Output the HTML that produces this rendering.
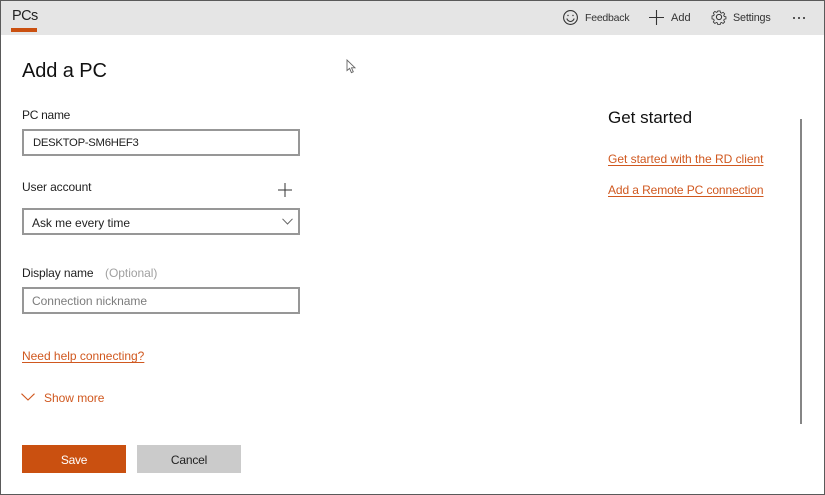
<!DOCTYPE html>
<html><head><meta charset="utf-8"><style>
html,body{margin:0;padding:0;background:#fff}
#p{position:relative;width:825px;height:495px;overflow:hidden;background:#fff;font-family:"Liberation Sans",sans-serif;color:#1f1f1f;filter:blur(.3px)}
#p div,#p svg{position:absolute}
.t{white-space:nowrap;font-size:12.5px;line-height:16px}
.l{color:#d0581f;text-decoration:underline;text-underline-offset:2px}
.b{box-sizing:border-box;left:22px;width:278px;height:27px;border:2px solid #979797;background:#fff}
</style></head><body><div id="p">
<div style="left:0;top:0;width:825px;height:35px;background:#e5e5e5"></div>
<div style="left:0;top:0;width:825px;height:1px;background:#5a5a5a"></div>
<div style="left:0;top:0;width:1px;height:495px;background:#5a5a5a"></div>
<div style="left:823.5px;top:0;width:1.5px;height:495px;background:#5a5a5a"></div>
<div style="left:0;top:493.5px;width:825px;height:1.5px;background:#5a5a5a"></div>
<div class="t" style="left:12px;top:7px;font-size:14.5px;line-height:18px;letter-spacing:-.6px;color:#222">PCs</div>
<div style="left:11px;top:28px;width:26px;height:4px;background:#ca5010"></div>

<svg style="left:562px;top:9px" width="17" height="17" viewBox="0 0 17 17" fill="none" stroke="#333" stroke-width="1.1"><circle cx="8.5" cy="8.5" r="6.9"/><path d="M4.8 9.6c.8 2 2.2 2.9 3.7 2.9s2.9-.9 3.7-2.9"/><circle cx="6" cy="6.5" r=".7" fill="#333" stroke="none"/><circle cx="11" cy="6.5" r=".7" fill="#333" stroke="none"/></svg>
<div class="t" style="left:585px;top:10px;font-size:10.5px;letter-spacing:-.22px;color:#333">Feedback</div>
<svg style="left:649px;top:10px" width="15" height="15" viewBox="0 0 15 15" stroke="#333" stroke-width="1.1"><path d="M0 7.5H15M7.5 0V15"/></svg>
<div class="t" style="left:671px;top:10px;font-size:11px;color:#333">Add</div>
<svg style="left:711px;top:9px" width="16" height="16" viewBox="0 0 16 16" fill="none" stroke="#333" stroke-width="1"><circle cx="8" cy="8" r="2.6"/><path d="M6.7 1h2.6l.4 2 1.3.6 1.8-1.1 1.8 1.9-1.1 1.7.6 1.3 2 .4v2.4l-2 .4-.6 1.3 1.1 1.8-1.8 1.8-1.8-1.1-1.3.6-.4 2H6.7l-.4-2-1.3-.6-1.8 1.1-1.8-1.8 1.1-1.8-.6-1.3-2-.4V6.8l2-.4.6-1.3-1.1-1.7 1.8-1.9L5 2.6l1.3-.6z" transform="translate(1.1 1.1) scale(.86)"/></svg>
<div class="t" style="left:733px;top:10px;font-size:10.8px;letter-spacing:-.18px;color:#333">Settings</div>
<div style="left:793px;top:17px;width:2px;height:2px;background:#555"></div>
<div style="left:798px;top:17px;width:2px;height:2px;background:#555"></div>
<div style="left:803px;top:17px;width:2px;height:2px;background:#555"></div>

<svg style="left:346px;top:59px" width="11" height="15" viewBox="0 0 11 15" fill="#fff" stroke="#666" stroke-width=".9"><path d="M1 1V11.5L3.6 9.4 5.4 13.6 7.3 12.8 5.5 8.8H9z"/></svg>

<div class="t" style="left:22px;top:59px;font-size:20px;line-height:24px;letter-spacing:-.1px;color:#111">Add a PC</div>
<div class="t" style="left:22px;top:107px;font-size:12px;letter-spacing:-.28px">PC name</div>
<div class="b" style="top:129px"></div>
<div class="t" style="left:33px;top:135px;font-size:11.3px;letter-spacing:-.28px;color:#222">DESKTOP-SM6HEF3</div>
<div class="t" style="left:22px;top:179px;font-size:12px;letter-spacing:-.11px">User account</div>
<svg style="left:278px;top:183px" width="14" height="14" viewBox="0 0 14 14" stroke="#333" stroke-width="1"><path d="M0 7H14M7 0V14"/></svg>
<div class="b" style="top:208px"></div>
<div class="t" style="left:32px;top:215px;font-size:12px;letter-spacing:-.04px;color:#222">Ask me every time</div>
<svg style="left:282px;top:218px" width="11" height="7" viewBox="0 0 11 7" fill="none" stroke="#666" stroke-width="1"><path d="M.5 .8L5.5 6 10.5 .8"/></svg>
<div class="t" style="left:22px;top:265px;font-size:12px;letter-spacing:-.1px">Display name</div>
<div class="t" style="left:105px;top:265px;font-size:12px;letter-spacing:-.03px;color:#a0a0a0">(Optional)</div>
<div class="b" style="top:287px"></div>
<div class="t" style="left:32px;top:293px;font-size:12px;letter-spacing:-.02px;color:#7c7c7c">Connection nickname</div>
<div class="t l" style="left:22px;top:348px;font-size:12px;letter-spacing:-.02px">Need help connecting?</div>
<svg style="left:21px;top:393px" width="14" height="8" viewBox="0 0 14 8" fill="none" stroke="#d0581f" stroke-width="1.1"><path d="M.5 .7L7 7 13.5 .7"/></svg>
<div class="t" style="left:44px;top:390px;font-size:12px;letter-spacing:-.03px;color:#d0581f">Show more</div>
<div style="left:22px;top:445px;width:104px;height:28px;background:#ca5010"></div>
<div class="t" style="left:22px;top:452px;width:104px;text-align:center;font-size:12px;letter-spacing:-.25px;color:#fff">Save</div>
<div style="left:137px;top:445px;width:104px;height:28px;background:#cbcbcb"></div>
<div class="t" style="left:137px;top:452px;width:104px;text-align:center;font-size:12px;letter-spacing:-.2px;color:#222">Cancel</div>

<div class="t" style="left:608px;top:108px;font-size:17px;line-height:20px;color:#111">Get started</div>
<div class="t l" style="left:608px;top:151px;font-size:12px;letter-spacing:-.02px">Get started with the RD client</div>
<div class="t l" style="left:608px;top:182px;font-size:12px;letter-spacing:-.1px">Add a Remote PC connection</div>
<div style="left:800px;top:119px;width:2px;height:305px;background:#858585"></div>
</div></body></html>
